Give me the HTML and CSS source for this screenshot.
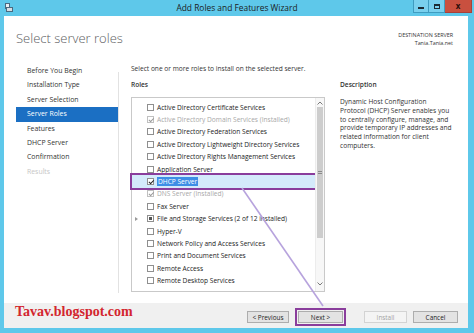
FILE: index.html
```html
<!DOCTYPE html>
<html lang="en">
<head>
    <meta charset="UTF-8">
    <title>Add Roles and Features Wizard</title>
    <link rel="stylesheet" href="styles.css">
</head>
<body>
    <div class="window">
        <div class="titlebar">
            <div class="app-icon">
                <svg viewBox="0 0 8 9" width="8" height="9">
                    <rect x="0.5" y="0.5" width="4" height="5" fill="#e8eef2" stroke="#4a6a80" stroke-width="1"/>
                    <rect x="1.5" y="4.5" width="6" height="4" fill="#d6dde2" stroke="#4a6a80" stroke-width="1"/>
                </svg>
            </div>
            <div class="title">Add Roles and Features Wizard</div>
            <div class="controls">
                <span class="ctl ctl-min"><i></i></span>
                <span class="ctl ctl-max"><i></i></span>
                <span class="ctl ctl-close">x</span>
            </div>
        </div>

        <div class="frame">
            <div class="client">
                <div class="head">
                    <h1>Select server roles</h1>
                    <div class="dest">
                        <div>DESTINATION SERVER</div>
                        <div>Tania.Tania.net</div>
                    </div>
                </div>

                <div class="body">
                    <nav class="steps">
                        <div class="step">Before You Begin</div>
                        <div class="step">Installation Type</div>
                        <div class="step">Server Selection</div>
                        <div class="step active">Server Roles</div>
                        <div class="step">Features</div>
                        <div class="step">DHCP Server</div>
                        <div class="step">Confirmation</div>
                        <div class="step disabled">Results</div>
                    </nav>

                    <div class="main">
                        <p class="intro">Select one or more roles to install on the selected server.</p>
                        <div class="cols">
                            <div class="roles-col">
                                <div class="label">Roles</div>
                                <div class="listbox">
                                    <div class="rows">
                                        <div class="row"><span class="exp"></span><span class="cb"></span>Active Directory Certificate Services</div>
                                        <div class="row installed"><span class="exp"></span><span class="cb checked"></span>Active Directory Domain Services (Installed)</div>
                                        <div class="row"><span class="exp"></span><span class="cb"></span>Active Directory Federation Services</div>
                                        <div class="row"><span class="exp"></span><span class="cb"></span>Active Directory Lightweight Directory Services</div>
                                        <div class="row"><span class="exp"></span><span class="cb"></span>Active Directory Rights Management Services</div>
                                        <div class="row"><span class="exp"></span><span class="cb"></span>Application Server</div>
                                        <div class="row selected"><span class="exp"></span><span class="cb checked"></span><span class="sel-text">DHCP Server</span></div>
                                        <div class="row installed"><span class="exp"></span><span class="cb checked"></span>DNS Server (Installed)</div>
                                        <div class="row"><span class="exp"></span><span class="cb"></span>Fax Server</div>
                                        <div class="row"><span class="exp"><span class="tri"></span></span><span class="cb partial"></span>File and Storage Services (2 of 12 installed)</div>
                                        <div class="row"><span class="exp"></span><span class="cb"></span>Hyper-V</div>
                                        <div class="row"><span class="exp"></span><span class="cb"></span>Network Policy and Access Services</div>
                                        <div class="row"><span class="exp"></span><span class="cb"></span>Print and Document Services</div>
                                        <div class="row"><span class="exp"></span><span class="cb"></span>Remote Access</div>
                                        <div class="row"><span class="exp"></span><span class="cb"></span>Remote Desktop Services</div>
                                    </div>
                                    <div class="scrollbar">
                                        <div class="sb-arrow">
                                            <svg viewBox="0 0 6 4" width="6" height="4"><polyline points="0.5,3.5 3,1 5.5,3.5" fill="none" stroke="#7a7a7a" stroke-width="1"/></svg>
                                        </div>
                                        <div class="sb-thumb"><span class="grip"></span></div>
                                        <div class="sb-track"></div>
                                        <div class="sb-arrow">
                                            <svg viewBox="0 0 6 4" width="6" height="4"><polyline points="0.5,0.5 3,3 5.5,0.5" fill="none" stroke="#7a7a7a" stroke-width="1"/></svg>
                                        </div>
                                    </div>
                                </div>
                            </div>
                            <div class="desc-col">
                                <div class="label">Description</div>
                                <p class="desc">
                                    Dynamic Host Configuration<br>
                                    Protocol (DHCP) Server enables you<br>
                                    to centrally configure, manage, and<br>
                                    provide temporary IP addresses and<br>
                                    related information for client<br>
                                    computers.
                                </p>
                            </div>
                        </div>
                    </div>
                </div>

                <div class="footer">
                    <span class="blog">Tavav.blogspot.com</span>
                    <div class="buttons">
                        <button class="btn">&lt; Previous</button>
                        <span class="mark"><button class="btn">Next &gt;</button></span>
                        <button class="btn btn-install" disabled>Install</button>
                        <button class="btn">Cancel</button>
                    </div>
                </div>
            </div>
        </div>

        <!-- annotation arrow drawn over the dialog -->
        <svg class="annot" viewBox="0 0 474 333" width="474" height="333">
            <line x1="242" y1="188" x2="323" y2="306" stroke="#b7a3dd" stroke-width="1.6"/>
        </svg>
    </div>
</body>
</html>
```

FILE: styles.css
```css
:root {
    --frame: #5ec8ea;
    --frame-dark: #3f9cc0;
    --text: #262626;
    --muted: #a8a8a8;
    --accent: #1b6fc3;
    --border: #c9c9c9;
    --purple: #8a3d9c;
}

* {
    margin: 0;
    padding: 0;
    box-sizing: border-box;
}

body {
    width: 474px;
    height: 333px;
    overflow: hidden;
    font-family: 'Open Sans', 'Noto Sans', sans-serif;
    color: var(--text);
    background: var(--frame);
}

.window {
    position: relative;
    height: 333px;
    display: flex;
    flex-direction: column;
    background: var(--frame);
}

/* title bar */
.titlebar {
    height: 16px;
    display: grid;
    grid-template-columns: 1fr auto 1fr;
    align-items: start;
}

.app-icon {
    padding: 3px 0 0 5px;
    line-height: 0;
}

.title {
    font-size: 8.4px;
    line-height: 15px;
    color: #1c1c1c;
}

.controls {
    justify-self: end;
    display: flex;
    margin-right: 2px;
}

.ctl {
    height: 13px;
    width: 16px;
    display: flex;
    align-items: center;
    justify-content: center;
    background: #79d0ee;
    border: 1px solid var(--frame-dark);
    border-top: none;
}

.ctl + .ctl {
    border-left: none;
}

.ctl-min i {
    width: 6px;
    height: 2px;
    margin-top: 4px;
    background: #1d2b33;
}

.ctl-max i {
    width: 6px;
    height: 5px;
    border: 1px solid #1d2b33;
    border-top-width: 2px;
}

.ctl-close {
    width: 27px;
    background: #c9503f;
    border-color: #a8413a;
    color: #2a0d0a;
    font-size: 8px;
    font-weight: 700;
    line-height: 1;
}

/* white dialog area */
.frame {
    flex: 1;
    display: flex;
    padding: 0 6px 5px 4px;
}

.client {
    flex: 1;
    display: flex;
    flex-direction: column;
    background: #fff;
}

.head {
    height: 48px;
    display: flex;
    justify-content: space-between;
    padding: 0 15px 0 12px;
}

.head h1 {
    font-size: 13px;
    font-weight: 300;
    line-height: 20px;
    color: #5c5d61;
    padding-top: 12px;
}

.dest {
    font-size: 5.4px;
    line-height: 8px;
    text-align: right;
    padding-top: 15px;
    color: #333;
}

.body {
    flex: 1;
    display: flex;
    padding-bottom: 10px;
}

/* steps on the left */
.steps {
    width: 115px;
    padding: 0 1px 0 12px;
    background: linear-gradient(#e2e2e2, #e2e2e2) right 8px / 1px calc(100% - 8px) no-repeat;
}

.step {
    height: 14.4px;
    line-height: 14.4px;
    padding-left: 11px;
    font-size: 6.9px;
    color: #333;
}

.step.active {
    background: var(--accent);
    color: #fff;
}

.step.disabled {
    color: #c6c6c6;
}

/* main column */
.main {
    flex: 1;
    padding: 0 10px 0 12px;
}

.intro {
    font-size: 6.6px;
    line-height: 10px;
    color: #333;
}

.cols {
    display: flex;
    gap: 15px;
    margin-top: 6px;
}

.label {
    font-size: 6.6px;
    font-weight: 600;
    line-height: 10px;
    color: #333;
}

.listbox {
    width: 194px;
    height: 195px;
    margin-top: 7px;
    border: 1px solid var(--border);
    display: flex;
}

.rows {
    flex: 1;
    padding-top: 3px;
}

.row {
    height: 12.4px;
    display: flex;
    align-items: center;
    font-size: 6.6px;
    color: #222;
    white-space: nowrap;
}

.row.installed {
    color: var(--muted);
}

.row.selected {
    background: #d4eafb;
    outline: 2px solid var(--purple);
}

.sel-text {
    background: #3d8ee6;
    color: #fff;
    padding: 0 1px;
    line-height: 9px;
}

.exp {
    width: 15px;
    display: flex;
    align-items: center;
    padding-left: 3px;
}

.tri {
    width: 0;
    height: 0;
    border-top: 2.5px solid transparent;
    border-bottom: 2.5px solid transparent;
    border-left: 3px solid #9a9a9a;
}

.cb {
    width: 7px;
    height: 7px;
    margin-right: 3px;
    border: 1px solid #8f8f8f;
    background: #fff;
    position: relative;
    flex: none;
}

.cb.checked::after {
    content: '';
    position: absolute;
    left: 1.5px;
    top: 0;
    width: 2px;
    height: 3.5px;
    border: solid #222;
    border-width: 0 1px 1px 0;
    transform: rotate(45deg);
}

.installed .cb {
    border-color: #c0c0c0;
}

.installed .cb.checked::after {
    border-color: #9a9a9a;
}

.cb.partial::after {
    content: '';
    position: absolute;
    left: 1px;
    top: 1px;
    width: 3px;
    height: 3px;
    background: #555;
}

/* scroll bar */
.scrollbar {
    width: 9px;
    display: flex;
    flex-direction: column;
    background: #f7f7f7;
    border-left: 1px solid #ececec;
}

.sb-arrow {
    height: 9px;
    display: flex;
    align-items: center;
    justify-content: center;
    line-height: 0;
}

.sb-arrow:last-child {
    height: 14px;
}

.sb-thumb {
    height: 131px;
    margin: 0 1px;
    background: #cdcdcd;
    display: flex;
    align-items: center;
    justify-content: center;
}

.grip {
    width: 4px;
    height: 4px;
    background: repeating-linear-gradient(#8a8a8a 0 1px, transparent 1px 2px);
}

.sb-track {
    flex: 1;
}

/* description */
.desc {
    margin-top: 8px;
    font-size: 6.6px;
    line-height: 8.8px;
    color: #333;
    white-space: nowrap;
}

/* footer */
.footer {
    height: 25px;
    display: flex;
    align-items: center;
    padding: 3px 10px 0 11px;
    background: #f0f0f0;
}

.blog {
    font-family: 'Liberation Serif', serif;
    font-weight: 700;
    font-size: 14px;
    color: #d3262e;
    margin-bottom: 10px;
}

.buttons {
    margin-left: auto;
    display: flex;
    align-items: center;
}

.btn {
    width: 42px;
    height: 12px;
    font-family: inherit;
    font-size: 6.4px;
    color: #222;
    background: #e3e3e3;
    border: 1px solid #adadad;
}

.mark {
    display: flex;
    margin: 0 18px 0 6px;
    padding: 1px;
    border: 2px solid var(--purple);
}

.mark .btn {
    width: 39px;
}

.btn-install {
    width: 43px;
    margin-right: 6px;
    color: #a3a3a3;
    background: #f4f4f4;
    border-color: #d3d3d3;
}

.btn:last-child {
    width: 45px;
}

.annot {
    position: absolute;
    top: 0;
    left: 0;
    pointer-events: none;
}
```
